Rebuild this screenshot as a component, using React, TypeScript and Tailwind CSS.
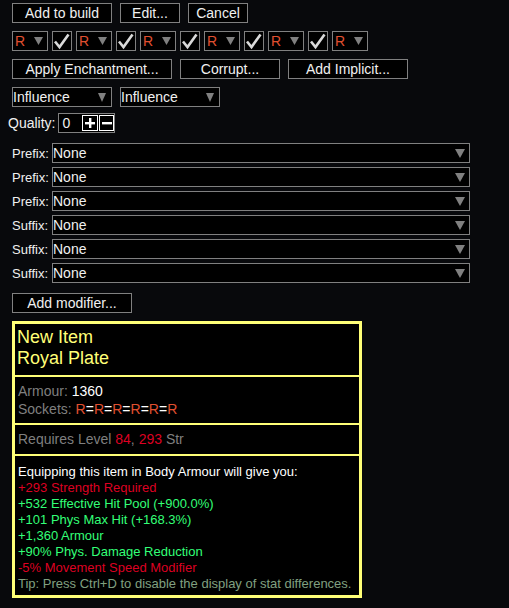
import React from 'react';

const GRAY = 'border-[#808080]';

const Btn: React.FC<{ w: string; children: React.ReactNode }> = ({ w, children }) => (
  <div className={`${w} h-5 border ${GRAY} bg-black flex items-center justify-center text-[14px] leading-none text-[#f0f0f0]`}>
    {children}
  </div>
);

const Arrow: React.FC<{ w?: number; h?: number }> = ({ w = 9, h = 8 }) => (
  <svg width={w} height={h} viewBox={`0 0 ${w} ${h}`} className="shrink-0">
    <polygon points={`0,0 ${w},0 ${w / 2},${h}`} fill="#808080" />
  </svg>
);

const SocketDrop: React.FC = () => (
  <div className={`w-[36px] h-5 border ${GRAY} bg-black flex items-center justify-between pl-[2px] pr-[4px]`}>
    <span className="text-[14px] leading-none text-[#e05030]">R</span>
    <Arrow w={9} h={8} />
  </div>
);

const Check: React.FC = () => (
  <div className={`w-5 h-5 border ${GRAY} bg-black`}>
    <svg width="18" height="18" viewBox="0 0 18 18">
      <polyline points="2,9.5 6.5,15 15.5,2.5" fill="none" stroke="#dadada" strokeWidth="2.6" strokeLinejoin="miter" />
    </svg>
  </div>
);

const Influence: React.FC = () => (
  <div className={`w-[100px] h-5 border ${GRAY} bg-black flex items-center justify-between pr-[5px]`}>
    <span className="text-[14px] leading-none text-[#f0f0f0]">Influence</span>
    <Arrow w={8} h={9} />
  </div>
);

const AffixRow: React.FC<{ label: string }> = ({ label }) => (
  <div className="flex items-center gap-1">
    <div className="w-[36px] text-right text-[13px] leading-none text-[#f0f0f0]">{label}</div>
    <div className={`w-[418px] h-5 border ${GRAY} bg-black flex items-center justify-between pr-[4px]`}>
      <span className="text-[14px] leading-none text-[#f0f0f0]">None</span>
      <Arrow w={10} h={9} />
    </div>
  </div>
);

export default function App() {
  const affixes = ['Prefix:', 'Prefix:', 'Prefix:', 'Suffix:', 'Suffix:', 'Suffix:'];

  return (
    <div className="w-[509px] min-h-[608px] bg-[#08090c] pl-3 pt-[3px] font-['Liberation_Sans',Arial,sans-serif] text-white">
      {/* top buttons */}
      <div className="flex gap-2">
        <Btn w="w-[100px]">Add to build</Btn>
        <Btn w="w-[60px]">Edit...</Btn>
        <Btn w="w-[60px]">Cancel</Btn>
      </div>

      {/* sockets */}
      <div className="mt-2 flex gap-1">
        {[0, 1, 2, 3, 4, 5].map((i) => (
          <React.Fragment key={i}>
            <SocketDrop />
            {i < 5 && <Check />}
          </React.Fragment>
        ))}
      </div>

      <div className="mt-2 flex gap-2">
        <Btn w="w-[160px]">Apply Enchantment...</Btn>
        <Btn w="w-[100px]">Corrupt...</Btn>
        <Btn w="w-[120px]">Add Implicit...</Btn>
      </div>

      <div className="mt-2 flex gap-2">
        <Influence />
        <Influence />
      </div>

      {/* quality */}
      <div className="mt-[6px] -ml-1 flex items-center gap-[3px]">
        <span className="text-[14px] leading-none text-[#f0f0f0]">Quality:</span>
        <div className={`w-[57px] h-5 border ${GRAY} bg-black flex items-center justify-between`}>
          <span className="pl-[3px] text-[14px] leading-none text-[#f0f0f0]">0</span>
          <div className="flex gap-[1px]">
            <div className="w-4 h-4 border border-white bg-black flex items-center justify-center">
              <svg width="10" height="10" viewBox="0 0 10 10">
                <rect x="4" y="0" width="2.4" height="10" fill="#fff" />
                <rect x="0" y="4" width="10" height="2.4" fill="#fff" />
              </svg>
            </div>
            <div className="w-[15px] h-4 border border-white bg-black flex items-center justify-center">
              <svg width="10" height="10" viewBox="0 0 10 10">
                <rect x="0" y="4" width="10" height="2.4" fill="#fff" />
              </svg>
            </div>
          </div>
        </div>
      </div>

      {/* affixes */}
      <div className="mt-[10px] flex flex-col gap-1">
        {affixes.map((a, i) => (
          <AffixRow key={i} label={a} />
        ))}
      </div>

      <div className="mt-[10px] flex">
        <Btn w="w-[120px]">Add modifier...</Btn>
      </div>

      {/* item tooltip */}
      <div className="mt-2 w-[350px] border-[3px] border-[#ffff77] bg-black">
        <div className="pl-[2px] pt-[3px] pb-[6px] text-[18px] leading-[21px] text-[#ffff77]">
          <div>New Item</div>
          <div>Royal Plate</div>
        </div>
        <div className="border-t-2 border-[#ffff77] pl-[3px] pt-[5px] pb-[5px] text-[14px] leading-[18px]">
          <div>
            <span className="text-[#7f7f7f]">Armour: </span>
            <span className="text-white">1360</span>
          </div>
          <div>
            <span className="text-[#7f7f7f]">Sockets: </span>
            <span className="text-[#e05030]">R</span>=<span className="text-[#e05030]">R</span>=
            <span className="text-[#e05030]">R</span>=<span className="text-[#e05030]">R</span>=
            <span className="text-[#e05030]">R</span>=<span className="text-[#e05030]">R</span>
          </div>
        </div>
        <div className="border-t-2 border-[#ffff77] pl-[3px] pt-[5px] pb-[6px] text-[14px] leading-[18px] text-[#7f7f7f]">
          Requires Level <span className="text-[#dd0022]">84</span>, <span className="text-[#dd0022]">293</span> Str
        </div>
        <div className="border-t-2 border-[#ffff77] pl-[3px] pt-2 pb-[3px] text-[13px] leading-[16px]">
          <div className="text-white">Equipping this item in Body Armour will give you:</div>
          <div className="text-[#dd0022]">+293 Strength Required</div>
          <div className="text-[#33ff77]">+532 Effective Hit Pool (+900.0%)</div>
          <div className="text-[#33ff77]">+101 Phys Max Hit (+168.3%)</div>
          <div className="text-[#33ff77]">+1,360 Armour</div>
          <div className="text-[#33ff77]">+90% Phys. Damage Reduction</div>
          <div className="text-[#dd0022]">-5% Movement Speed Modifier</div>
          <div className="text-[#80a080]">Tip: Press Ctrl+D to disable the display of stat differences.</div>
        </div>
      </div>
    </div>
  );
}
